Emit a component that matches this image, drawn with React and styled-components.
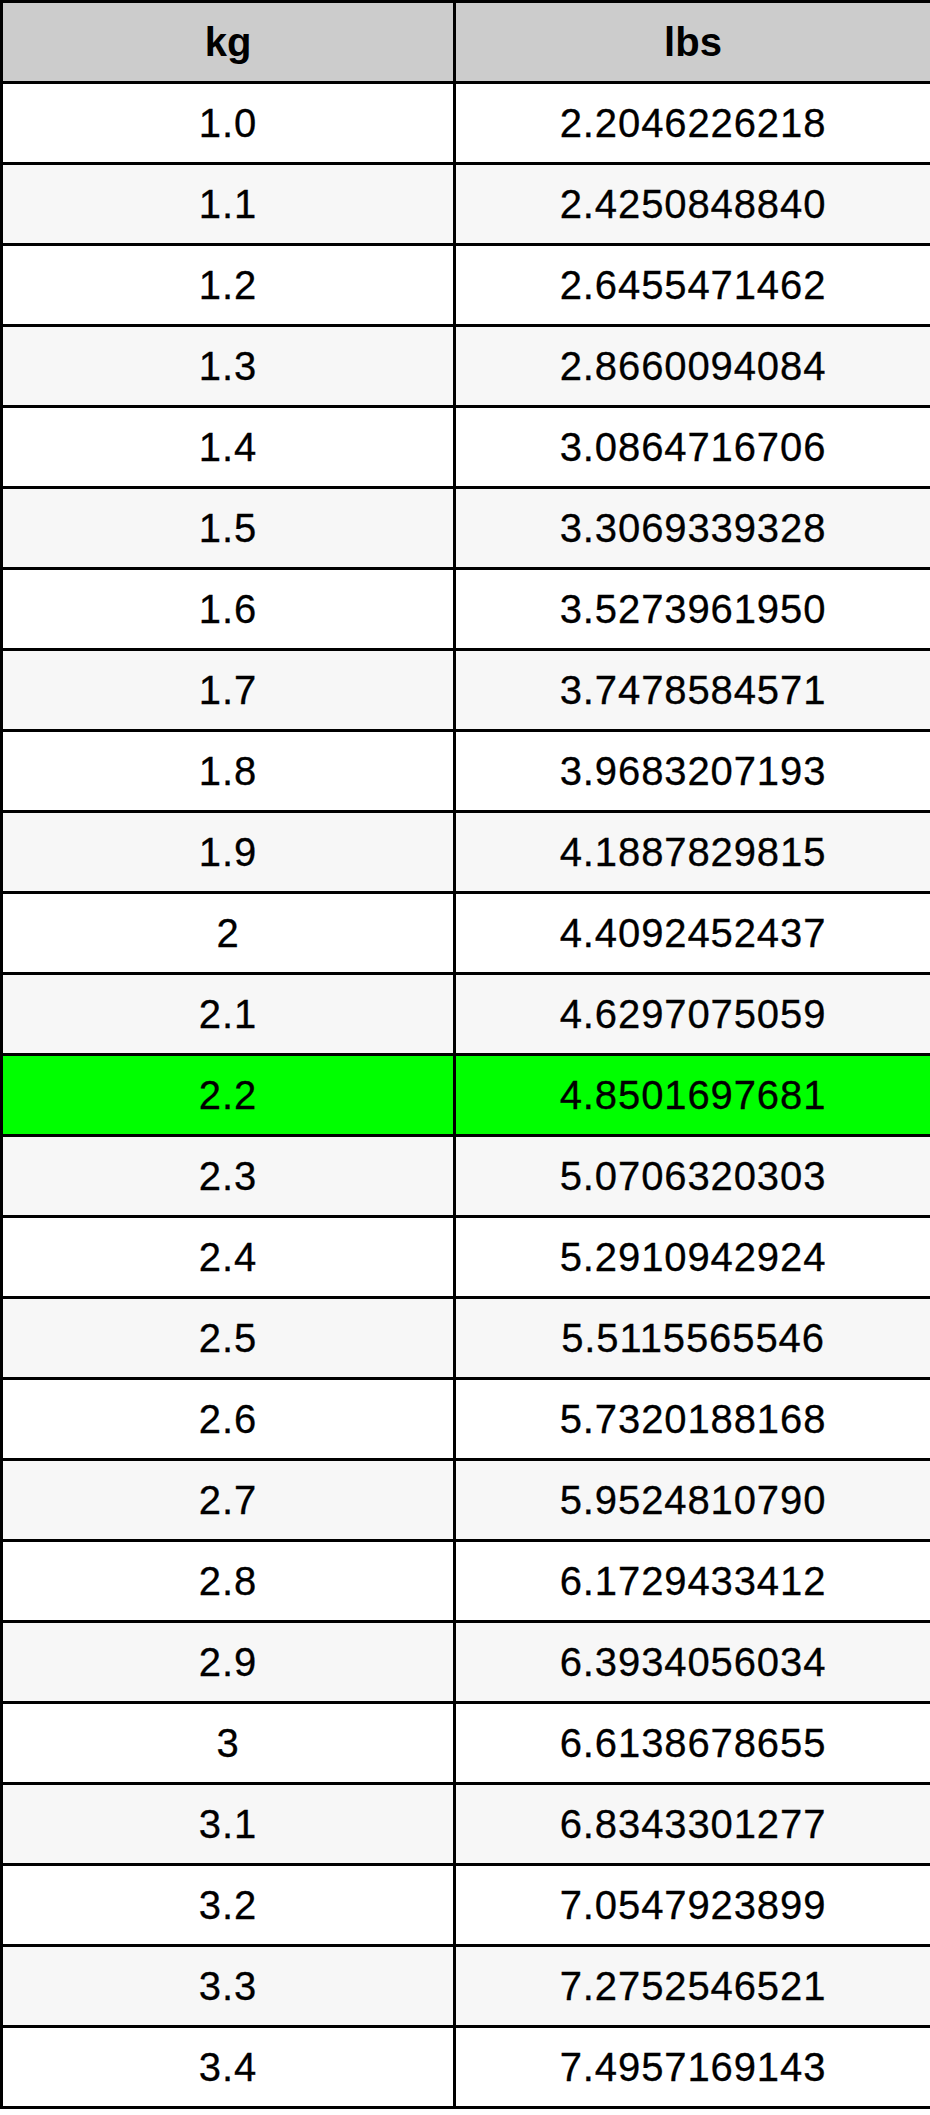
import React from "react";
import styled, { createGlobalStyle } from "styled-components";

const GlobalStyle = createGlobalStyle`
  html, body {
    margin: 0;
    padding: 0;
    background: #fff;
  }
`;

const Table = styled.table`
  width: 930px;
  border-collapse: collapse;
  table-layout: fixed;
  font-family: "Liberation Sans", Arial, sans-serif;
  color: #000;
`;

const Col = styled.col`
  width: ${(p) => p.width}px;
`;

const HeadCell = styled.th`
  height: 78px;
  padding: 0;
  border: 3px solid #000;
  background-color: #cccccc;
  font-size: 40px;
  font-weight: bold;
  text-align: center;
  vertical-align: middle;
`;

const Row = styled.tr`
  background-color: ${(p) => (p.highlight ? "#00ff00" : p.shaded ? "#f7f7f7" : "#fff")};
`;

const Cell = styled.td`
  height: 78px;
  padding: 0;
  border: 3px solid #000;
  font-size: 40px;
  letter-spacing: 0.9px;
  -webkit-text-stroke: 0.3px #000;
  text-align: center;
  vertical-align: middle;
`;

const rows = [
  ["1.0", "2.2046226218"],
  ["1.1", "2.4250848840"],
  ["1.2", "2.6455471462"],
  ["1.3", "2.8660094084"],
  ["1.4", "3.0864716706"],
  ["1.5", "3.3069339328"],
  ["1.6", "3.5273961950"],
  ["1.7", "3.7478584571"],
  ["1.8", "3.9683207193"],
  ["1.9", "4.1887829815"],
  ["2", "4.4092452437"],
  ["2.1", "4.6297075059"],
  ["2.2", "4.8501697681"],
  ["2.3", "5.0706320303"],
  ["2.4", "5.2910942924"],
  ["2.5", "5.5115565546"],
  ["2.6", "5.7320188168"],
  ["2.7", "5.9524810790"],
  ["2.8", "6.1729433412"],
  ["2.9", "6.3934056034"],
  ["3", "6.6138678655"],
  ["3.1", "6.8343301277"],
  ["3.2", "7.0547923899"],
  ["3.3", "7.2752546521"],
  ["3.4", "7.4957169143"],
];

export default function App() {
  return (
    <>
      <GlobalStyle />
      <Table>
        <colgroup>
          <Col width={453} />
          <Col width={477} />
        </colgroup>
        <thead>
          <tr>
            <HeadCell>kg</HeadCell>
            <HeadCell>lbs</HeadCell>
          </tr>
        </thead>
        <tbody>
          {rows.map(([kg, lbs], i) => (
            <Row key={kg} shaded={i % 2 === 1} highlight={kg === "2.2"}>
              <Cell>{kg}</Cell>
              <Cell>{lbs}</Cell>
            </Row>
          ))}
        </tbody>
      </Table>
    </>
  );
}
